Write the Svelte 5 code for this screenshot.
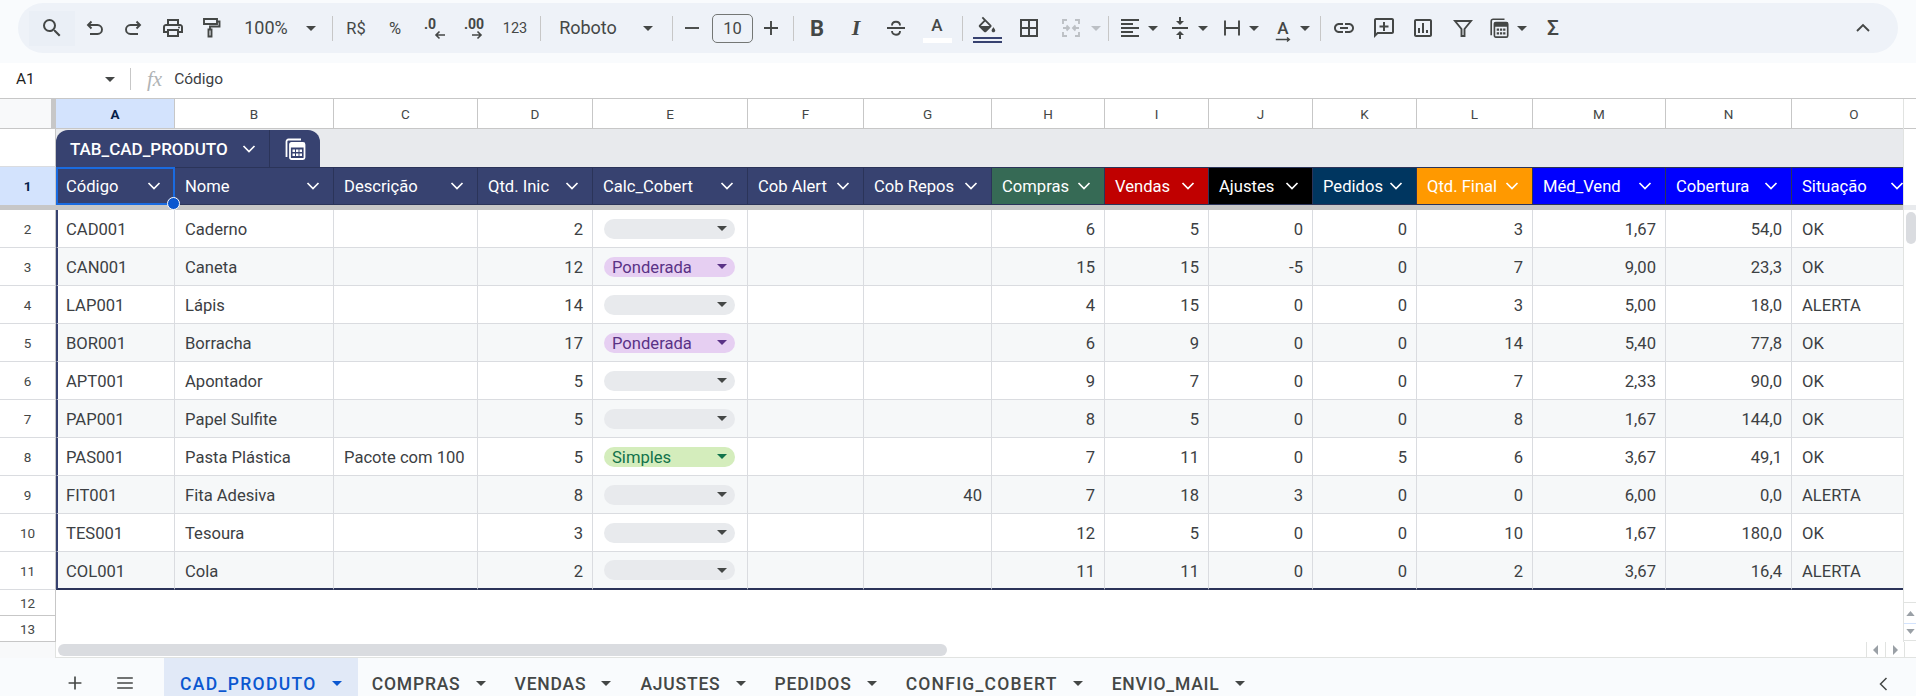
<script>
  // caminhos dos ícones (viewBox 24)
  const paths = {
    search: "M15.5 14h-.79l-.28-.27A6.471 6.471 0 0 0 16 9.5 6.5 6.5 0 1 0 9.5 16c1.61 0 3.09-.59 4.23-1.57l.27.28v.79l5 4.99L20.49 19l-4.99-5zm-6 0C7.01 14 5 11.99 5 9.5S7.01 5 9.5 5 14 7.01 14 9.5 11.99 14 9.5 14z",
    print: "M19 8h-1V3H6v5H5c-1.66 0-3 1.34-3 3v6h4v4h12v-4h4v-6c0-1.66-1.34-3-3-3zM8 5h8v3H8V5zm8 12v2H8v-4h8v2zm2-2v-2H6v2H4v-4c0-.55.45-1 1-1h14c.55 0 1 .45 1 1v4h-2z",
    fill: "M16.56 8.94L7.62 0 6.21 1.41l2.38 2.38-5.15 5.15c-.59.59-.59 1.54 0 2.12l5.5 5.5c.29.29.68.44 1.06.44s.77-.15 1.06-.44l5.5-5.5c.59-.58.59-1.53 0-2.12zM5.21 10L10 5.21 14.79 10H5.21zM19 11.5s-2 2.17-2 3.5c0 1.1.9 2 2 2s2-.9 2-2c0-1.33-2-3.5-2-3.5z",
    borders: "M3 3v18h18V3H3zm8 16H5v-6h6v6zm0-8H5V5h6v6zm8 8h-6v-6h6v6zm0-8h-6V5h6v6z",
    align: "M15 15H3v2h12v-2zm0-8H3v2h12V7zM3 13h18v-2H3v2zm0 8h18v-2H3v2zM3 3v2h18V3H3z",
    valign: "M8 19h3v4h2v-4h3l-4-4-4 4zm8-14h-3V1h-2v4H8l4 4 4-4zM4 11v2h16v-2H4z",
    link: "M3.9 12c0-1.71 1.39-3.1 3.1-3.1h4V7H7c-2.76 0-5 2.24-5 5s2.24 5 5 5h4v-1.9H7c-1.71 0-3.1-1.39-3.1-3.1zM8 13h8v-2H8v2zm9-6h-4v1.9h4c1.71 0 3.1 1.39 3.1 3.1s-1.39 3.1-3.1 3.1h-4V17h4c2.76 0 5-2.24 5-5s-2.24-5-5-5z",
    comment: "M20 2H4c-1.1 0-2 .9-2 2v18l4-4h14c1.1 0 2-.9 2-2V4c0-1.1-.9-2-2-2zm0 14H5.17L4 17.17V4h16v12zM13 6h-2v3.5H7.5v2H11V15h2v-3.5h3.5v-2H13z",
    chart: "M19 3H5c-1.1 0-2 .9-2 2v14c0 1.1.9 2 2 2h14c1.1 0 2-.9 2-2V5c0-1.1-.9-2-2-2zm0 16H5V5h14v14zM7 12h2v5H7zM11 7h2v10h-2zM15 14h2v3h-2z",
  };
  const strokes = {
    undo: "M8.5 5.5 5 9l3.5 3.5M5 9h9.5a4.5 4.5 0 0 1 0 9H7",
    redo: "M15.5 5.5 19 9l-3.5 3.5M19 9H9.5a4.5 4.5 0 0 0 0 9H17",
    paint: "M5 3h13v5H5zM18 5.5h2.5v5H11v3M9.5 13.5h3v7h-3z",
    minus: "M5 12h14",
    plus: "M5 12h14M12 5v14",
    strike: "M3 12h18M8 9.5C8 4.5 16 4.5 16 9.5M16 15c0 5-8 5-8 0",
    merge: "M4 8V4h4M4 16v4h4M20 8V4h-4M20 16v4h-4M4 12h6M7.5 9.5 10 12l-2.5 2.5M20 12h-6M16.5 9.5 14 12l2.5 2.5",
    wrap: "M5 4.5v15M19 4.5v15M5 12h14",
    filter: "M4 5h16l-6.5 8v7h-3v-7z",
    collapse: "M6 15l6-6 6 6",
  };

  // barra de ferramentas: centro de cada item em x
  const rawTools = [
    { t: "path", id: "search", c: 52, w: 46, focus: true },
    { t: "stroke", id: "undo", c: 95, w: 24 },
    { t: "stroke", id: "redo", c: 133, w: 24 },
    { t: "path", id: "print", c: 173, w: 24 },
    { t: "stroke", id: "paint", c: 211, w: 24 },
    { t: "text", label: "100%", cls: "big", c: 266, w: 46 },
    { t: "caret", c: 311, w: 10 },
    { t: "sep", c: 332, w: 1 },
    { t: "text", label: "R$", cls: "mid", c: 356, w: 24 },
    { t: "text", label: "%", cls: "mid", c: 395, w: 24 },
    { t: "dec", label: ".0", dir: "left", c: 435, w: 24 },
    { t: "dec", label: ".00", dir: "right", c: 475, w: 24 },
    { t: "text", label: "123", cls: "small", c: 515, w: 30 },
    { t: "sep", c: 540, w: 1 },
    { t: "text", label: "Roboto", cls: "big", c: 588, w: 60 },
    { t: "caret", c: 648, w: 10 },
    { t: "sep", c: 672.5, w: 1 },
    { t: "stroke", id: "minus", c: 692, w: 24 },
    { t: "size", label: "10", c: 732.5, w: 41 },
    { t: "stroke", id: "plus", c: 771, w: 24 },
    { t: "sep", c: 793, w: 1 },
    { t: "text", label: "B", cls: "bold", c: 817, w: 24 },
    { t: "text", label: "I", cls: "ital", c: 856, w: 24 },
    { t: "stroke", id: "strike", c: 896, w: 24 },
    { t: "acolor", c: 937, w: 29 },
    { t: "sep", c: 962, w: 1 },
    { t: "fill", c: 987, w: 29 },
    { t: "path", id: "borders", c: 1029, w: 24 },
    { t: "stroke", id: "merge", c: 1071, w: 24, off: true },
    { t: "caret", c: 1096, w: 10, off: true },
    { t: "sep", c: 1108.5, w: 1 },
    { t: "path", id: "align", c: 1130, w: 24 },
    { t: "caret", c: 1153, w: 10 },
    { t: "path", id: "valign", c: 1180, w: 24 },
    { t: "caret", c: 1203, w: 10 },
    { t: "stroke", id: "wrap", c: 1232, w: 24 },
    { t: "caret", c: 1254, w: 10 },
    { t: "rotate", c: 1283, w: 22 },
    { t: "caret", c: 1304.5, w: 10 },
    { t: "sep", c: 1320.5, w: 1 },
    { t: "path", id: "link", c: 1344, w: 24 },
    { t: "path", id: "comment", c: 1384, w: 24 },
    { t: "path", id: "chart", c: 1423, w: 24 },
    { t: "stroke", id: "filter", c: 1462.5, w: 24 },
    { t: "calc", c: 1499, w: 22 },
    { t: "caret", c: 1522, w: 10 },
    { t: "text", label: "Σ", cls: "sigma", c: 1553, w: 20 },
    { t: "stroke", id: "collapse", c: 1863, w: 24 },
  ];

  let end = 18;
  const tools = rawTools.map((item) => {
    const m = item.c - item.w / 2 - end;
    end = item.c + item.w / 2;
    return { ...item, m };
  });

  const letters = "ABCDEFGHIJKLMNO".split("");

  const headers = [
    { label: "Código" },
    { label: "Nome" },
    { label: "Descrição" },
    { label: "Qtd. Inic" },
    { label: "Calc_Cobert" },
    { label: "Cob Alert" },
    { label: "Cob Repos" },
    { label: "Compras", cls: "green" },
    { label: "Vendas", cls: "red" },
    { label: "Ajustes", cls: "black" },
    { label: "Pedidos", cls: "navy" },
    { label: "Qtd. Final", cls: "orange" },
    { label: "Méd_Vend", cls: "blue" },
    { label: "Cobertura", cls: "blue" },
    { label: "Situação", cls: "blue last" },
  ];

  const rows = [
    ["CAD001", "Caderno", "", "2", "", "", "", "6", "5", "0", "0", "3", "1,67", "54,0", "OK"],
    ["CAN001", "Caneta", "", "12", "Ponderada", "", "", "15", "15", "-5", "0", "7", "9,00", "23,3", "OK"],
    ["LAP001", "Lápis", "", "14", "", "", "", "4", "15", "0", "0", "3", "5,00", "18,0", "ALERTA"],
    ["BOR001", "Borracha", "", "17", "Ponderada", "", "", "6", "9", "0", "0", "14", "5,40", "77,8", "OK"],
    ["APT001", "Apontador", "", "5", "", "", "", "9", "7", "0", "0", "7", "2,33", "90,0", "OK"],
    ["PAP001", "Papel Sulfite", "", "5", "", "", "", "8", "5", "0", "0", "8", "1,67", "144,0", "OK"],
    ["PAS001", "Pasta Plástica", "Pacote com 100", "5", "Simples", "", "", "7", "11", "0", "5", "6", "3,67", "49,1", "OK"],
    ["FIT001", "Fita Adesiva", "", "8", "", "", "40", "7", "18", "3", "0", "0", "6,00", "0,0", "ALERTA"],
    ["TES001", "Tesoura", "", "3", "", "", "", "12", "5", "0", "0", "10", "1,67", "180,0", "OK"],
    ["COL001", "Cola", "", "2", "", "", "", "11", "11", "0", "0", "2", "3,67", "16,4", "ALERTA"],
  ];

  const textCols = [0, 1, 2, 14];
  const chipClass = { Ponderada: "purple", Simples: "lime", "": "empty" };

  const tabs = ["COMPRAS", "VENDAS", "AJUSTES", "PEDIDOS", "CONFIG_COBERT", "ENVIO_MAIL"];
</script>

{#snippet caret()}
  <svg class="caret" viewBox="0 0 10 5"><path d="M0 0h10L5 5z" /></svg>
{/snippet}

{#snippet chevron()}
  <svg class="chev" viewBox="0 0 14 8"><path d="M1.5 1 7 6.5 12.5 1" /></svg>
{/snippet}

{#snippet calcIcon(cls)}
  <svg class="calc {cls}" viewBox="0 0 24 24">
    <path class="ln" d="M3.5 20V4.5a2 2 0 0 1 2-2H18" />
    <rect class="ln" x="7" y="6" width="14.5" height="16" rx="1.5" />
    <path class="sq" d="M7 6h14.5v4.5H7zM9.5 12.5h2.5v2.5H9.5zM13 12.5h2.5v2.5H13zM16.5 12.5H19v2.5h-2.5zM9.5 16.5h2.5V19H9.5zM13 16.5h2.5V19H13zM16.5 16.5H19V19h-2.5z" />
  </svg>
{/snippet}

<div class="app">
  <div class="toolwrap">
    <div class="toolbar">
      {#each tools as item}
        <div
          class="tool"
          class:focus={item.focus}
          class:off={item.off}
          style="margin-left:{item.m}px;width:{item.w}px"
        >
          {#if item.t === "path"}
            <svg class="ico" viewBox="0 0 24 24"><path d={paths[item.id]} />{#if item.id === "print"}<circle cx="18" cy="11.5" r="1" />{/if}</svg>
          {:else if item.t === "stroke"}
            <svg class="ico line" viewBox="0 0 24 24"><path d={strokes[item.id]} /></svg>
          {:else if item.t === "text"}
            <span class={item.cls}>{item.label}</span>
          {:else if item.t === "caret"}
            {@render caret()}
          {:else if item.t === "sep"}
            <span class="sep"></span>
          {:else if item.t === "dec"}
            <span class="dec {item.dir}">
              <span class="dectext">{item.label}</span>
              <svg viewBox="0 0 12 10"><path d={item.dir === "left" ? "M11 5H2M5.5 1.5 2 5l3.5 3.5" : "M1 5h9M6.5 1.5 10 5 6.5 8.5"} /></svg>
            </span>
          {:else if item.t === "size"}
            <span class="sizebox">{item.label}</span>
          {:else if item.t === "acolor"}
            <span class="stack">
              <span class="aglyph">A</span>
              <span class="whitebar"></span>
            </span>
          {:else if item.t === "fill"}
            <span class="stack">
              <svg class="bucket" viewBox="0 0 24 18"><path d={paths.fill} /></svg>
              <span class="navybar"></span>
            </span>
          {:else if item.t === "rotate"}
            <span class="stack">
              <span class="aglyph under">A</span>
              <svg class="rotarrow" viewBox="0 0 20 7"><path d="M1 3.5h17M15 1l3 2.5L15 6" /></svg>
            </span>
          {:else if item.t === "calc"}
            {@render calcIcon("dark")}
          {/if}
        </div>
      {/each}
    </div>
  </div>

  <div class="formula">
    <div class="namebox">
      <span>A1</span>
      {@render caret()}
    </div>
    <span class="fsep"></span>
    <span class="fx">fx</span>
    <span class="ftext">Código</span>
  </div>

  <div class="sheet">
    <div class="row colhead">
      <div class="corner"></div>
      {#each letters as letter, i}
        <div class="letter" class:active={i === 0} class:wide={i === 14}>{letter}</div>
      {/each}
      <div class="tail"></div>
    </div>

    <div class="row bandrow">
      <div class="rownum"></div>
      <div class="band">
        <div class="tabletab">
          <span class="tabname">TAB_CAD_PRODUTO</span>
          {@render chevron()}
          <span class="tabdiv"></span>
          {@render calcIcon("light")}
        </div>
      </div>
      <div class="tail"></div>
    </div>

    <div class="row headrow">
      <div class="rownum current">1</div>
      {#each headers as h, i}
        <div class="hcell {h.cls ?? 'base'}">
          <span>{h.label}</span>
          {@render chevron()}
          {#if i === 0}
            <span class="selection"><span class="handle"></span></span>
          {/if}
        </div>
      {/each}
      <div class="tail"></div>
    </div>

    <div class="freeze"></div>

    {#each rows as row, r}
      <div class="row datarow" class:alt={r % 2 === 1} class:lastrow={r === rows.length - 1}>
        <div class="rownum">{r + 2}</div>
        {#each row as value, c}
          {#if c === 4}
            <div class="cell chipcell">
              <div class="chip {chipClass[value]}">
                <span>{value}</span>
                {@render caret()}
              </div>
            </div>
          {:else}
            <div class="cell" class:num={!textCols.includes(c)} class:first={c === 0}>{value}</div>
          {/if}
        {/each}
        <div class="tail"></div>
      </div>
    {/each}

    <div class="row blank"><div class="rownum">12</div></div>
    <div class="row blank"><div class="rownum">13</div></div>

    <div class="hscroll">
      <div class="hstub"></div>
      <div class="htrack"><div class="hthumb"></div></div>
      <div class="harrow"><svg viewBox="0 0 6 10"><path d="M5 0v10L0 5z" /></svg></div>
      <div class="harrow"><svg viewBox="0 0 6 10"><path d="M1 0v10l5-5z" /></svg></div>
      <div class="hcorner"></div>
    </div>

    <div class="vscroll">
      <div class="vthumb"></div>
      <div class="varrow up"><svg viewBox="0 0 10 6"><path d="M0 6h10L5 0z" /></svg></div>
      <div class="varrow"><svg viewBox="0 0 10 6"><path d="M0 0h10L5 6z" /></svg></div>
    </div>
  </div>

  <div class="footer">
    <svg class="fico first" viewBox="0 0 24 24"><path d="M5 12h14M12 5v14" /></svg>
    <svg class="fico" viewBox="0 0 24 24"><path d="M3.5 6.5h17M3.5 12h17M3.5 17.5h17" /></svg>
    <div class="tab active">
      <span>CAD_PRODUTO</span>
      {@render caret()}
    </div>
    {#each tabs as tab}
      <div class="tab" class:loose={tab === "CONFIG_COBERT"}>
        <span>{tab}</span>
        {@render caret()}
      </div>
    {/each}
    <svg class="collapse" viewBox="0 0 12 20"><path d="M10 2 2 10l8 8" /></svg>
  </div>
</div>

<style>
  :global(body) {
    margin: 0;
    background: #fff;
  }

  .app {
    width: 1916px;
    height: 696px;
    overflow: hidden;
    font-family: Roboto, "Liberation Sans", sans-serif;
    color: #444746;
    display: flex;
    flex-direction: column;
  }

  /* barra de ferramentas */
  .toolwrap {
    height: 63px;
    box-sizing: border-box;
    padding: 3px 0 0 18px;
    background: #f9fbfd;
    flex: none;
  }

  .toolbar {
    width: 1880px;
    height: 50px;
    border-radius: 25px;
    background: #eef2f8;
    display: flex;
    align-items: center;
  }

  .tool {
    flex: none;
    height: 24px;
    display: flex;
    align-items: center;
    justify-content: center;
  }

  .tool.focus {
    height: 35px;
    background: #eaeff6;
  }

  .ico {
    width: 24px;
    height: 24px;
    flex: none;
    fill: #444746;
  }

  .ico.line {
    fill: none;
    stroke: #444746;
    stroke-width: 1.9;
  }

  .tool.off .ico.line {
    stroke: #bcc0c5;
  }

  .tool.off .caret {
    fill: #bcc0c5;
  }

  .caret {
    width: 10px;
    height: 5px;
    flex: none;
    fill: #444746;
  }

  .sep {
    width: 1px;
    height: 25px;
    background: #c7c7c7;
  }

  .big {
    font-size: 18px;
    white-space: nowrap;
    margin-bottom: 2px;
  }

  .mid {
    font-size: 16.5px;
  }

  .small {
    font-size: 14.5px;
  }

  .bold {
    font-size: 22px;
    font-weight: 700;
  }

  .ital {
    font-size: 22px;
    font-weight: 700;
    font-style: italic;
    font-family: "Liberation Serif", serif;
  }

  .sigma {
    font-size: 21px;
    font-weight: 500;
  }

  .dec {
    position: relative;
    width: 24px;
    height: 24px;
    display: block;
  }

  .dectext {
    position: absolute;
    top: 0;
    left: 1px;
    font-size: 14px;
    font-weight: 700;
    line-height: 16px;
    white-space: nowrap;
  }

  .dec svg {
    position: absolute;
    top: 14px;
    left: 11px;
    width: 12px;
    height: 10px;
    fill: none;
    stroke: #444746;
    stroke-width: 1.6;
  }

  .dec.right svg {
    left: 8px;
  }

  .sizebox {
    width: 41px;
    height: 29px;
    box-sizing: border-box;
    border: 1px solid #747775;
    border-radius: 5px;
    font-size: 16.5px;
    line-height: 27px;
    text-align: center;
  }

  .stack {
    display: flex;
    flex-direction: column;
    align-items: center;
    justify-content: flex-end;
    height: 30px;
  }

  .aglyph {
    font-size: 17px;
    line-height: 17px;
    font-weight: 500;
  }

  .aglyph.under {
    margin-bottom: -1px;
  }

  .whitebar {
    margin-top: 4px;
    width: 29px;
    height: 5px;
    background: #fff;
  }

  .bucket {
    width: 22px;
    height: 18px;
    fill: #444746;
    margin-bottom: 3px;
  }

  .navybar {
    width: 29px;
    height: 6px;
    box-sizing: border-box;
    border-top: 2px solid #374270;
    border-bottom: 2px solid #374270;
  }

  .rotarrow {
    width: 16px;
    height: 7px;
    fill: none;
    stroke: #444746;
    stroke-width: 1.7;
  }

  .calc {
    width: 22px;
    height: 22px;
    flex: none;
  }

  .calc .ln {
    fill: none;
    stroke-width: 1.8;
  }

  .calc.dark .ln {
    stroke: #444746;
  }

  .calc.dark .sq {
    fill: #444746;
  }

  .calc.light .ln {
    stroke: #fff;
  }

  .calc.light .sq {
    fill: #fff;
  }

  /* barra de fórmulas */
  .formula {
    height: 35px;
    flex: none;
    box-sizing: border-box;
    background: #fff;
    display: flex;
    align-items: center;
    padding-bottom: 3px;
  }

  .namebox {
    width: 130px;
    box-sizing: border-box;
    padding: 0 15px 0 16px;
    display: flex;
    justify-content: space-between;
    align-items: center;
    font-size: 15.5px;
    color: #1f1f1f;
  }

  .fsep {
    width: 1px;
    height: 22px;
    background: #c7c7c7;
  }

  .fx {
    margin-left: 16px;
    font-family: "Liberation Serif", serif;
    font-style: italic;
    font-size: 21px;
    color: #b0b3b5;
  }

  .ftext {
    margin-left: 12px;
    font-size: 15.5px;
    color: #3c4043;
  }

  /* planilha */
  .sheet {
    position: relative;
    height: 559px;
    flex: none;
    background: #fff;
    border-top: 1px solid #c7c7c7;
    box-sizing: border-box;
  }

  .row {
    display: grid;
    grid-template-columns: 56px 119px 159px 144px 115px 155px 116px 128px 113px 104px 104px 104px 116px 133px 126px 112px 12px;
  }

  .colhead {
    height: 30px;
    border-bottom: 1px solid #c7c7c7;
    box-sizing: border-box;
  }

  .corner {
    background: #f8f9fa;
    border-right: 5px solid #c7c7c7;
    box-sizing: border-box;
  }

  .letter {
    border-right: 1px solid #c7c7c7;
    display: flex;
    align-items: center;
    justify-content: center;
    font-size: 13.5px;
    color: #444746;
  }

  .letter.active {
    background: #d3e3fd;
    font-weight: 700;
    color: #041e49;
  }

  .letter.wide {
    padding-left: 13px;
  }

  .tail {
    background: #fff;
  }

  .bandrow {
    height: 38px;
  }

  .rownum {
    display: flex;
    align-items: center;
    justify-content: center;
    background: #fff;
    border-right: 1px solid #c7c7c7;
    border-bottom: 1px solid #dadce0;
    box-sizing: border-box;
    font-size: 13.5px;
    color: #444746;
  }

  .rownum.current {
    background: #d3e3fd;
    font-weight: 700;
    color: #041e49;
    border-bottom: 0;
  }

  .band {
    grid-column: span 15;
    background: #e8eaed;
    display: flex;
    align-items: flex-end;
  }

  .tabletab {
    width: 264px;
    height: 37px;
    box-sizing: border-box;
    background: #374270;
    border-radius: 12px 12px 0 0;
    display: flex;
    align-items: center;
    padding-left: 14px;
    color: #fff;
  }

  .tabname {
    font-size: 17px;
    font-weight: 500;
    width: 172px;
    flex: none;
    white-space: nowrap;
  }

  .tabletab .calc {
    width: 24px;
    height: 24px;
  }

  .tabdiv {
    width: 1px;
    height: 37px;
    background: #2b3459;
    margin-left: 13px;
    margin-right: 13px;
    flex: none;
  }

  .chev {
    width: 14px;
    height: 8px;
    flex: none;
    fill: none;
    stroke: #fff;
    stroke-width: 1.7;
  }

  .headrow {
    height: 38px;
  }

  .hcell {
    position: relative;
    display: flex;
    align-items: center;
    justify-content: space-between;
    padding: 0 13px 0 10px;
    box-sizing: border-box;
    border-right: 1px solid #2b3459;
    border-top: 1px solid #2b3459;
    border-bottom: 1px solid #2b3459;
    color: #fff;
    font-size: 16.6px;
    white-space: nowrap;
    min-width: 0;
  }

  .hcell.base {
    background: #374270;
  }

  .hcell.green {
    background: #366a55;
  }

  .hcell.red {
    background: #c00000;
  }

  .hcell.black {
    background: #000;
  }

  .hcell.navy {
    background: #003660;
  }

  .hcell.orange {
    background: #ff9900;
  }

  .hcell.blue {
    background: #0000ff;
  }

  .hcell.last {
    padding-right: 0;
    overflow: hidden;
    border-right: 0;
  }

  .selection {
    position: absolute;
    inset: -1px -1px -1px 0;
    border: 2px solid #1a6be0;
  }

  .handle {
    position: absolute;
    right: -7px;
    bottom: -7px;
    width: 11px;
    height: 11px;
    border-radius: 50%;
    background: #0b57d0;
    border: 1px solid #fff;
    z-index: 2;
  }

  .freeze {
    height: 5px;
    box-sizing: border-box;
    background: #c7c7c7;
    border-right: 12px solid #e8eaed;
  }

  .datarow {
    height: 38px;
  }

  .cell {
    display: flex;
    align-items: center;
    box-sizing: border-box;
    padding: 2px 10px 0;
    background: #fff;
    border-right: 1px solid #dadce0;
    border-bottom: 1px solid #dadce0;
    font-size: 16.6px;
    color: #3c4043;
    white-space: nowrap;
    min-width: 0;
  }

  .alt .cell {
    background: #f6f8f9;
  }

  .cell.num {
    justify-content: flex-end;
    padding-right: 9px;
  }

  .cell.first {
    border-left: 2px solid #374270;
    padding-left: 8px;
  }

  .lastrow .cell {
    border-bottom: 2px solid #2b3459;
  }

  .chipcell {
    padding: 0 12px 0 11px;
  }

  .chip {
    flex: 1;
    height: 20px;
    border-radius: 10px;
    display: flex;
    align-items: center;
    justify-content: space-between;
    padding: 0 8px;
    font-size: 16.6px;
  }

  .chip span {
    padding-top: 2px;
  }

  .chip .caret {
    width: 10px;
    height: 5px;
  }

  .chip.empty {
    background: #e8eaed;
  }

  .chip.purple {
    background: #e6cff2;
    color: #5a3286;
  }

  .chip.purple .caret {
    fill: #5a3286;
  }

  .chip.lime {
    background: #d4edbc;
    color: #11734b;
  }

  .chip.lime .caret {
    fill: #11734b;
  }

  .blank {
    height: 26px;
  }

  .blank .rownum {
    border-bottom: 1px solid #c7c7c7;
  }

  .hscroll {
    height: 16px;
    display: flex;
  }

  .hstub {
    width: 56px;
    flex: none;
    background: #f8f9fa;
    border-right: 1px solid #e1e3e1;
    box-sizing: border-box;
  }

  .htrack {
    width: 1810px;
    flex: none;
    padding: 2px 0 0 2px;
    box-sizing: border-box;
  }

  .hthumb {
    width: 889px;
    height: 12px;
    border-radius: 6px;
    background: #dadce0;
  }

  .harrow {
    width: 19px;
    flex: none;
    box-sizing: border-box;
    border-left: 1px solid #e1e3e1;
    display: flex;
    align-items: center;
    justify-content: center;
  }

  .harrow svg {
    width: 6px;
    height: 10px;
    fill: #9aa0a6;
  }

  .hcorner {
    flex: 1;
    border-left: 1px solid #e1e3e1;
  }

  .vscroll {
    position: absolute;
    top: 0;
    right: 0;
    width: 13px;
    height: 543px;
    border-left: 1px solid #e1e3e1;
    box-sizing: border-box;
  }

  .vthumb {
    position: absolute;
    top: 113px;
    left: 2px;
    width: 10px;
    height: 32px;
    border-radius: 5px;
    background: #dadce0;
  }

  .varrow {
    position: absolute;
    top: 523px;
    left: 0;
    width: 12px;
    height: 18px;
    display: flex;
    align-items: center;
    justify-content: center;
    border-bottom: 1px solid #e1e3e1;
  }

  .varrow.up {
    top: 503px;
    height: 20px;
    border-top: 1px solid #e1e3e1;
    border-bottom: 1px solid #d3e3fd;
  }

  .varrow svg {
    width: 9px;
    height: 5px;
    fill: #9aa0a6;
  }

  /* rodapé com as abas */
  .footer {
    height: 39px;
    flex: none;
    box-sizing: border-box;
    background: #f9fbfd;
    border-top: 1px solid #e1e3e1;
    display: flex;
    align-items: flex-start;
  }

  .fico {
    width: 22px;
    height: 22px;
    flex: none;
    margin-top: 14px;
    margin-left: 27.5px;
    fill: none;
    stroke: #444746;
    stroke-width: 1.8;
  }

  .fico.first {
    margin-left: 64px;
  }

  .tab {
    flex: none;
    height: 38px;
    box-sizing: border-box;
    padding: 15px 15px 0 14px;
    display: flex;
    align-items: flex-start;
    gap: 15px;
    font-size: 17.5px;
    font-weight: 500;
    line-height: 22px;
    letter-spacing: 0.8px;
    color: #444746;
  }

  .tab.loose {
    letter-spacing: 1.25px;
  }

  .tab .caret {
    margin-top: 8px;
  }

  .tab.active {
    margin-left: 28.5px;
    padding-left: 16px;
    padding-right: 16px;
    background: #e1e9f7;
    color: #0b57d0;
    letter-spacing: 1.35px;
  }

  .tab.active .caret {
    fill: #0b57d0;
  }

  .collapse {
    margin-left: auto;
    margin-right: 28px;
    margin-top: 18px;
    width: 9px;
    height: 16px;
    fill: none;
    stroke: #444746;
    stroke-width: 2;
  }
</style>
